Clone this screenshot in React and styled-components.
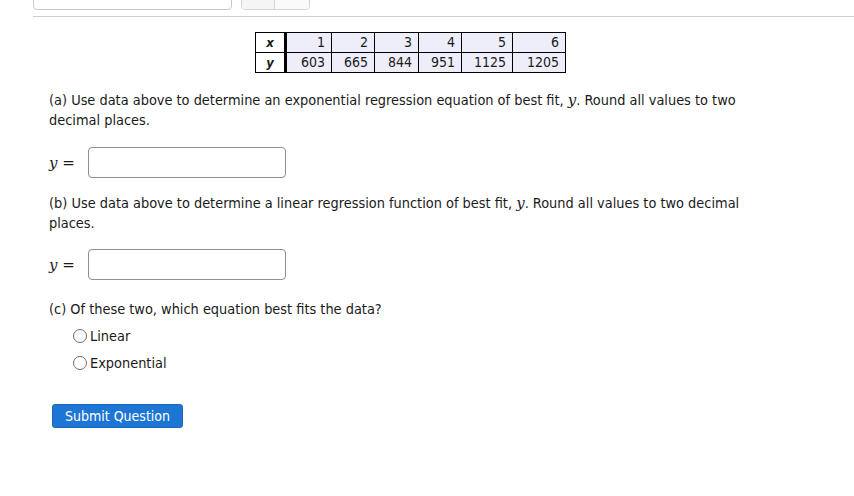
import styled, { createGlobalStyle } from "styled-components";

const Global = createGlobalStyle`
  body {
    margin: 0;
    background: #fff;
    font-family: "DejaVu Sans Condensed", "DejaVu Sans", sans-serif;
    font-size: 14.4px;
    color: #1a1a1a;
  }
`;

const Page = styled.div`
  width: 854px;
  height: 496px;
  overflow: hidden;
  padding-left: 33px;
  box-sizing: border-box;
`;

const TopBar = styled.div`
  display: flex;
  gap: 9px;
  height: 11px;
`;

const TopInput = styled.div`
  width: 199px;
  height: 30px;
  margin-top: -20px;
  border: 1px solid #c8c8c8;
  border-radius: 4px;
  box-sizing: border-box;
`;

const BtnGroup = styled.div`
  display: flex;
  margin-top: -20px;
  height: 30px;
  border: 1px solid #d4d4d4;
  border-radius: 4px;
  overflow: hidden;
  box-sizing: border-box;
`;

const GroupBtn = styled.div`
  width: ${(p) => p.w}px;
  background: ${(p) => p.bg};
  & + & {
    border-left: 1px solid #d4d4d4;
  }
`;

const Rule = styled.hr`
  margin: 5px 0 0 0;
  border: 0;
  border-top: 1px solid #cfcfcf;
`;

const Content = styled.div`
  padding-left: 16px;
`;

const TableWrap = styled.div`
  display: flex;
  padding-left: 222px;
  margin-top: 15px;
`;

const Table = styled.table`
  border-collapse: collapse;
  table-layout: fixed;
  width: 310px;
  font-size: 14px;
`;

const Head = styled.td`
  width: 28px;
  height: 19px;
  padding: 0;
  border: 1px solid #000;
  border-right: 3px solid #000;
  text-align: center;
  font-weight: bold;
  font-style: italic;
  font-size: 13px;
  background: #fff;
`;

const Cell = styled.td`
  width: ${(p) => p.w}px;
  height: 19px;
  padding: 0 6px 0 0;
  border: 1px solid #000;
  text-align: right;
  background: #eeeefa;
  line-height: 19px;
`;

const Para = styled.p`
  margin: ${(p) => p.mt}px 0 0 0;
  width: 705px;
  line-height: 20px;
`;

const M = styled.span`
  font-family: "DejaVu Serif", "Liberation Serif", serif;
  font-style: italic;
  font-size: 15px;
`;

const AnswerRow = styled.div`
  display: flex;
  align-items: center;
  margin-top: ${(p) => p.mt}px;
  gap: 13px;
`;

const Eq = styled.span`
  font-family: "DejaVu Serif", "Liberation Serif", serif;
  font-size: 15px;
  width: 26px;
  white-space: nowrap;
  i {
    font-style: italic;
  }
`;

const Field = styled.input`
  width: 198px;
  height: 31px;
  box-sizing: border-box;
  border: 1px solid #8f8f8f;
  border-radius: 4px;
  outline: none;
`;

const Choices = styled.div`
  display: flex;
  flex-direction: column;
  gap: 7px;
  margin-top: 7px;
  padding-left: 24px;
`;

const Choice = styled.label`
  display: flex;
  align-items: center;
  gap: 3px;
  height: 20px;
`;

const Radio = styled.span`
  width: 12px;
  height: 12px;
  border: 1px solid #6f6f6f;
  border-radius: 50%;
  display: inline-block;
`;

const Submit = styled.button`
  margin-top: 31px;
  margin-left: 3px;
  width: 131px;
  height: 24px;
  background: #1e76d4;
  color: #fff;
  border: 1px solid #1a66b8;
  border-radius: 3px;
  font-family: inherit;
  font-size: 14px;
  padding: 0;
`;

const xs = [1, 2, 3, 4, 5, 6];
const ys = [603, 665, 844, 951, 1125, 1205];
const widths = [38, 36, 37, 36, 44, 46];

export default function App() {
  return (
    <Page>
      <Global />
      <TopBar>
        <TopInput />
        <BtnGroup>
          <GroupBtn w={32} bg="#f5f5f5" />
          <GroupBtn w={34} bg="#fafafa" />
        </BtnGroup>
      </TopBar>
      <Rule />
      <TableWrap>
        <Table>
          <tbody>
            <tr>
              <Head>x</Head>
              {xs.map((v, i) => (
                <Cell key={v} w={widths[i]}>{v}</Cell>
              ))}
            </tr>
            <tr>
              <Head>y</Head>
              {ys.map((v, i) => (
                <Cell key={v} w={widths[i]}>{v}</Cell>
              ))}
            </tr>
          </tbody>
        </Table>
      </TableWrap>
      <Content>
        <Para mt={17}>
          (a) Use data above to determine an exponential regression equation of best fit, <M>y</M>. Round all values to two decimal places.
        </Para>
        <AnswerRow mt={17}>
          <Eq><i>y</i> =</Eq>
          <Field />
        </AnswerRow>
        <Para mt={15}>
          (b) Use data above to determine a linear regression function of best fit, <M>y</M>. Round all values to two decimal places.
        </Para>
        <AnswerRow mt={16}>
          <Eq><i>y</i> =</Eq>
          <Field />
        </AnswerRow>
        <Para mt={19}>(c) Of these two, which equation best fits the data?</Para>
        <Choices>
          <Choice><Radio />Linear</Choice>
          <Choice><Radio />Exponential</Choice>
        </Choices>
        <Submit>Submit Question</Submit>
      </Content>
    </Page>
  );
}
